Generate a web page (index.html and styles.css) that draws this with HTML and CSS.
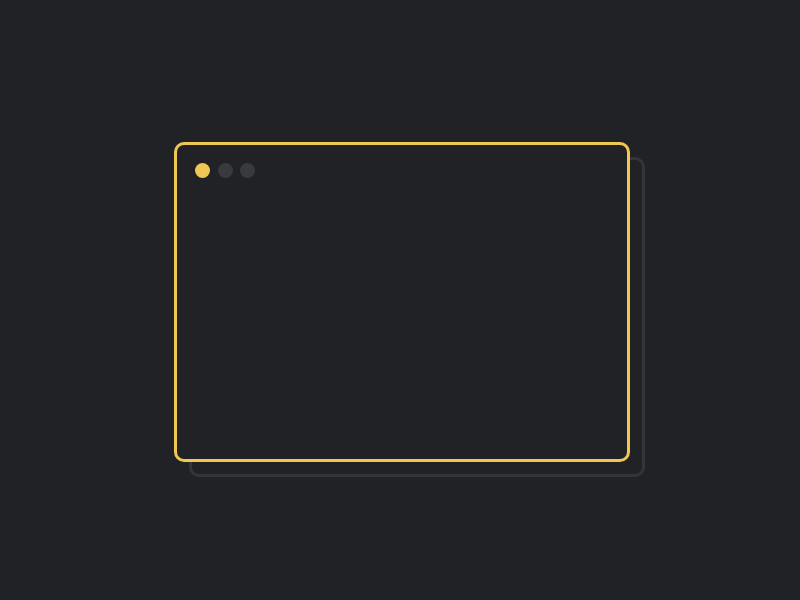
FILE: index.html
```html
<!DOCTYPE html>
<html>
<head>
<meta charset="utf-8">
<link rel="stylesheet" href="styles.css">
</head>
<body>
<div class="stage">
  <div class="window">
    <div class="dots">
      <span class="dot dot-active"></span>
      <span class="dot"></span>
      <span class="dot"></span>
    </div>
  </div>
</div>
</body>
</html>
```
FILE: styles.css
```css
html, body {
  margin: 0;
  padding: 0;
  background: #212225;
  width: 800px;
  height: 600px;
  overflow: hidden;
}
.stage {
  padding: 142px 0 0 174px;
}
.window {
  position: relative;
  box-sizing: border-box;
  width: 456px;
  height: 320px;
  border: 3px solid #f0c654;
  border-radius: 10px;
  background: #212225;
  padding: 18px;
}
.window::before {
  content: "";
  position: absolute;
  left: 12px;
  top: 12px;
  width: 456px;
  height: 320px;
  box-sizing: border-box;
  border: 3px solid #333539;
  border-radius: 10px;
  z-index: -1;
}
.stage {
  position: relative;
  z-index: 0;
}
.dots {
  display: flex;
  gap: 7.5px;
}
.dot {
  width: 15px;
  height: 15px;
  border-radius: 50%;
  background: #383b3e;
}
.dot-active {
  background: #f0c654;
}
```
